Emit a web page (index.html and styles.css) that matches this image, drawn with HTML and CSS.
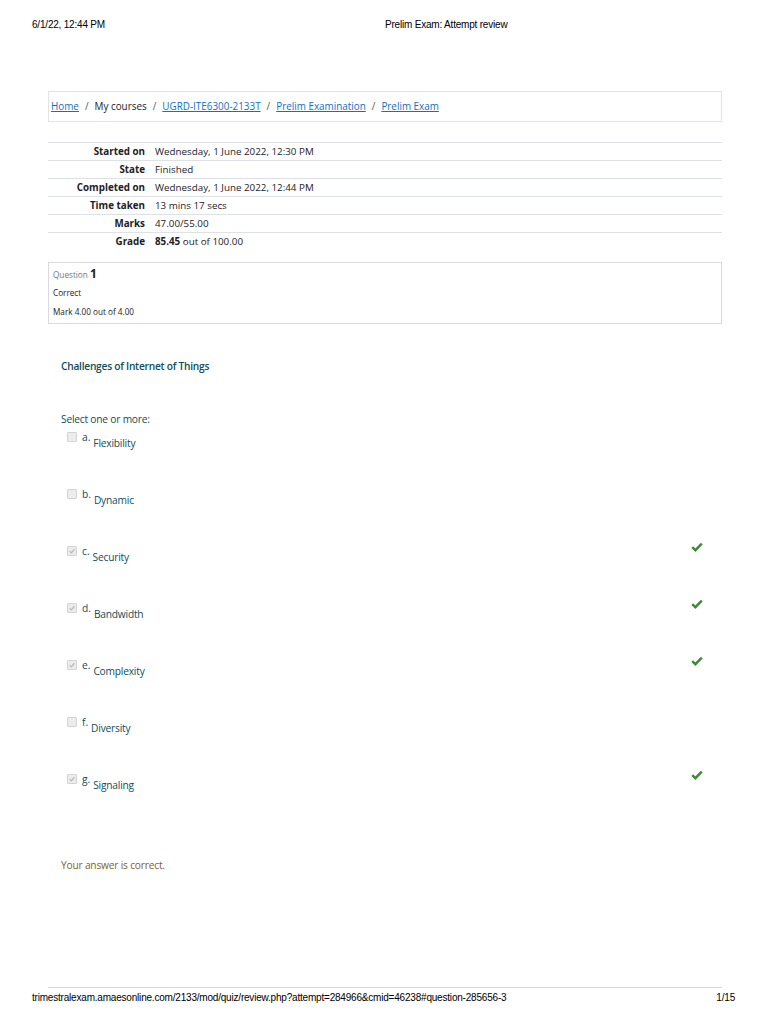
FILE: index.html
```html
<!DOCTYPE html>
<html lang="en">
<head>
    <meta charset="UTF-8">
    <meta name="viewport" content="width=device-width, initial-scale=1.0">
    <title>Prelim Exam: Attempt review</title>
    <link rel="stylesheet" href="styles.css">
</head>
<body>
    <div class="print-header">
        <span class="print-date">6/1/22, 12:44 PM</span>
        <span class="print-title">Prelim Exam: Attempt review</span>
    </div>

    <div class="page">
        <nav class="breadcrumb">
            <a href="#">Home</a>
            <span class="sep">/</span>
            <span class="crumb">My courses</span>
            <span class="sep">/</span>
            <a href="#">UGRD-ITE6300-2133T</a>
            <span class="sep">/</span>
            <a href="#">Prelim Examination</a>
            <span class="sep">/</span>
            <a href="#">Prelim Exam</a>
        </nav>

        <div class="summary">
            <div class="summary-row"><div class="summary-label">Started on</div><div class="summary-value">Wednesday, 1 June 2022, 12:30 PM</div></div>
            <div class="summary-row"><div class="summary-label">State</div><div class="summary-value">Finished</div></div>
            <div class="summary-row"><div class="summary-label">Completed on</div><div class="summary-value">Wednesday, 1 June 2022, 12:44 PM</div></div>
            <div class="summary-row"><div class="summary-label">Time taken</div><div class="summary-value">13 mins 17 secs</div></div>
            <div class="summary-row"><div class="summary-label">Marks</div><div class="summary-value">47.00/55.00</div></div>
            <div class="summary-row"><div class="summary-label">Grade</div><div class="summary-value"><strong>85.45</strong> out of 100.00</div></div>
        </div>

        <div class="question-info">
            <div class="qno">Question <span class="qnum">1</span></div>
            <div class="qstate">Correct</div>
            <div class="qgrade">Mark 4.00 out of 4.00</div>
        </div>

        <div class="question-content">
            <div class="qtext">Challenges of Internet of Things</div>
            <div class="prompt">Select one or more:</div>

            <div class="answers">
                <div class="answer">
                    <span class="checkbox"></span>
                    <span class="letter">a.</span>
                    <span class="label">Flexibility</span>
                </div>
                <div class="answer">
                    <span class="checkbox"></span>
                    <span class="letter">b.</span>
                    <span class="label">Dynamic</span>
                </div>
                <div class="answer">
                    <span class="checkbox checked"><svg viewBox="0 0 10 10"><path d="M2 5.2 L4.2 7.3 L8 2.8"/></svg></span>
                    <span class="letter">c.</span>
                    <span class="label">Security</span>
                    <svg class="tick" viewBox="0 0 12 10"><path d="M1.2 5.2 L4.4 8.2 L10.8 1.6"/></svg>
                </div>
                <div class="answer">
                    <span class="checkbox checked"><svg viewBox="0 0 10 10"><path d="M2 5.2 L4.2 7.3 L8 2.8"/></svg></span>
                    <span class="letter">d.</span>
                    <span class="label">Bandwidth</span>
                    <svg class="tick" viewBox="0 0 12 10"><path d="M1.2 5.2 L4.4 8.2 L10.8 1.6"/></svg>
                </div>
                <div class="answer">
                    <span class="checkbox checked"><svg viewBox="0 0 10 10"><path d="M2 5.2 L4.2 7.3 L8 2.8"/></svg></span>
                    <span class="letter">e.</span>
                    <span class="label">Complexity</span>
                    <svg class="tick" viewBox="0 0 12 10"><path d="M1.2 5.2 L4.4 8.2 L10.8 1.6"/></svg>
                </div>
                <div class="answer">
                    <span class="checkbox"></span>
                    <span class="letter">f.</span>
                    <span class="label">Diversity</span>
                </div>
                <div class="answer">
                    <span class="checkbox checked"><svg viewBox="0 0 10 10"><path d="M2 5.2 L4.2 7.3 L8 2.8"/></svg></span>
                    <span class="letter">g.</span>
                    <span class="label">Signaling</span>
                    <svg class="tick" viewBox="0 0 12 10"><path d="M1.2 5.2 L4.4 8.2 L10.8 1.6"/></svg>
                </div>
            </div>

            <div class="feedback">Your answer is correct.</div>
        </div>
    </div>

    <div class="page-end"></div>
    <div class="print-footer">
        <span>trimestralexam.amaesonline.com/2133/mod/quiz/review.php?attempt=284966&amp;cmid=46238#question-285656-3</span>
        <span>1/15</span>
    </div>
</body>
</html>
```

FILE: styles.css
```css
html, body {
    margin: 0;
    padding: 0;
}
body {
    height: 1024px;
    display: flex;
    flex-direction: column;
    background: #fff;
    color: #1d2125;
    font-family: "Open Sans", "Noto Sans", sans-serif;
    font-size: 9.8px;
    overflow: hidden;
}

/* print header / footer */
.print-header,
.print-footer {
    display: flex;
    font-family: "Liberation Sans", Arial, sans-serif;
    font-size: 10px;
    line-height: 12px;
    color: #000;
    letter-spacing: -0.2px;
}
.print-header {
    padding: 19px 32px 0 32px;
}
.print-date {
    width: 353px;
}
.print-footer {
    justify-content: space-between;
    padding: 4px 33px 20px 32px;
}
.page-end {
    margin: auto 46px 0 48px;
    border-top: 1px solid #d6d6d6;
}

.page {
    margin: 60px 46px 0 48px;
}

/* breadcrumb */
.breadcrumb {
    border: 1px solid #e3e3e3;
    padding: 8px 2px;
    line-height: 13px;
    font-size: 9.9px;
    display: flex;
    align-items: center;
}
.breadcrumb a {
    color: #1170c4;
    text-decoration: underline;
}
.breadcrumb .crumb {
    color: #1d2125;
}
.breadcrumb .sep {
    color: #555;
    margin: 0 6px;
}

/* summary table */
.summary {
    margin-top: 20px;
}
.summary-row {
    display: grid;
    grid-template-columns: 97px 1fr;
    column-gap: 10px;
    border-top: 1px solid #dee2e6;
    height: 17px;
    align-items: center;
}
.summary-label {
    text-align: right;
    font-weight: 700;
}
.summary-value strong {
    font-weight: 700;
}

/* question info box */
.question-info {
    margin-top: 12px;
    border: 1px solid #dadada;
    padding: 4px 4px 4px 4px;
    font-size: 8.2px;
}
.qno {
    line-height: 14px;
    color: #777;
}
.qnum {
    font-size: 12px;
    font-weight: 700;
    color: #1d2125;
}
.qstate {
    margin-top: 4px;
    line-height: 14px;
}
.qgrade {
    margin-top: 5px;
    line-height: 14px;
}

/* question content */
.question-content {
    padding-left: 13px;
    color: #0f4d5b;
    font-size: 10.2px;
}
.qtext {
    margin-top: 35px;
    line-height: 14px;
    font-weight: 600;
    letter-spacing: -0.25px;
}
.prompt {
    margin-top: 39px;
    line-height: 14px;
    letter-spacing: -0.2px;
}
.answers {
    margin-top: 0;
}
.answer {
    position: relative;
    display: flex;
    align-items: flex-start;
    height: 57px;
    padding-left: 6px;
}
.checkbox {
    width: 8px;
    height: 8px;
    margin-top: 6px;
    border: 1px solid #d4d4d4;
    border-radius: 1px;
    background: #ececec;
    display: flex;
}
.checkbox svg {
    width: 8px;
    height: 8px;
}
.checkbox svg path {
    fill: none;
    stroke: #b9b9b9;
    stroke-width: 1.6;
}
.letter {
    margin-left: 5px;
    line-height: 14px;
    margin-top: 4px;
}
.label {
    margin-left: 3px;
    line-height: 14px;
    margin-top: 10px;
    letter-spacing: -0.2px;
}
.tick {
    position: absolute;
    left: 630px;
    top: 2px;
    width: 12px;
    height: 10px;
}
.tick path {
    fill: none;
    stroke: #3c8a37;
    stroke-width: 2.4;
}
.feedback {
    margin-top: 33px;
    line-height: 14px;
    color: #85601f;
    letter-spacing: -0.2px;
}
```
